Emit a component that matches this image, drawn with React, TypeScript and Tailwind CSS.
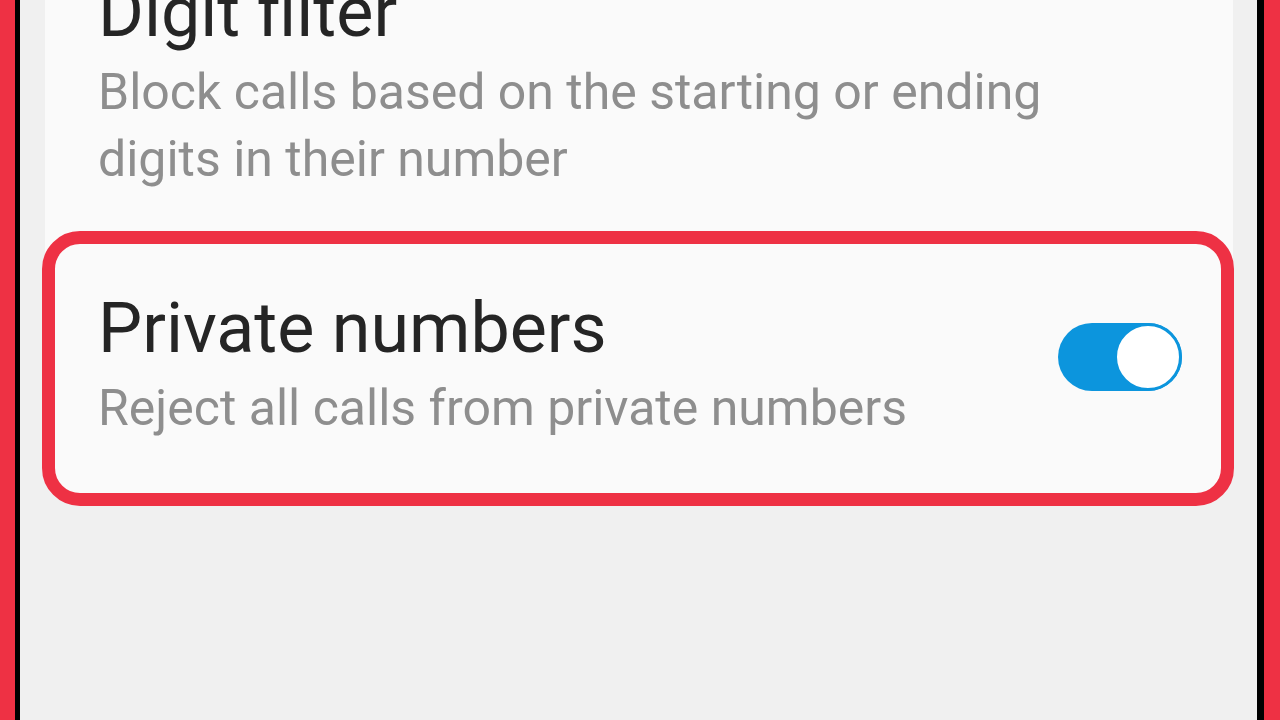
import React from 'react';

const font = { fontFamily: 'Roboto, "Noto Sans", Arial, sans-serif' };

interface RowProps {
  title: string;
  subtitle: string;
}

const Toggle: React.FC = () => (
  <div className="flex justify-end w-[124px] h-[68px] rounded-full bg-[#0c95dd] shrink-0">
    <div className="w-[68px] h-[68px] rounded-full bg-white border-[3px] border-[#0c95dd]" />
  </div>
);

const SettingText: React.FC<RowProps> = ({ title, subtitle }) => (
  <div className="flex flex-col">
    <div className="text-[70px] leading-[80px] text-[#252525]">{title}</div>
    <div className="mt-[7px] text-[50px] leading-[67px] text-[#8e8e8e]">{subtitle}</div>
  </div>
);

export default function App() {
  return (
    <div className="w-[1280px] h-[720px] flex overflow-hidden bg-[#f0f0f0]" style={font}>
      {/* Left frame */}
      <div className="w-[15px] bg-[#ee3144]" />
      <div className="w-[5px] bg-black" />

      {/* Screen */}
      <div className="flex-1 bg-[#f0f0f0] pl-[25px] pr-[24px] overflow-hidden">
        <div className="-mt-[28px] bg-[#fafafa] rounded-b-[28px] flex flex-col">
          {/* Digit filter */}
          <div className="pl-[53px] pr-[51px] pb-[47px]">
            <div className="w-[1000px]">
              <SettingText
                title="Digit filter"
                subtitle="Block calls based on the starting or ending digits in their number"
              />
            </div>
          </div>

          {/* Private numbers */}
          <div className="relative pl-[53px] pr-[51px] pt-[48px] pb-[52px] flex items-start justify-between">
            <SettingText title="Private numbers" subtitle="Reject all calls from private numbers" />
            <div className="mt-[35px]">
              <Toggle />
            </div>
            {/* Red highlight annotation */}
            <div className="absolute -top-[9px] -bottom-[12px] -left-[3px] -right-[1px] border-[13px] border-[#ee3144] rounded-[38px] pointer-events-none" />
          </div>
        </div>
      </div>

      {/* Right frame */}
      <div className="w-[7px] bg-black" />
      <div className="w-[16px] bg-[#ee3144]" />
    </div>
  );
}
